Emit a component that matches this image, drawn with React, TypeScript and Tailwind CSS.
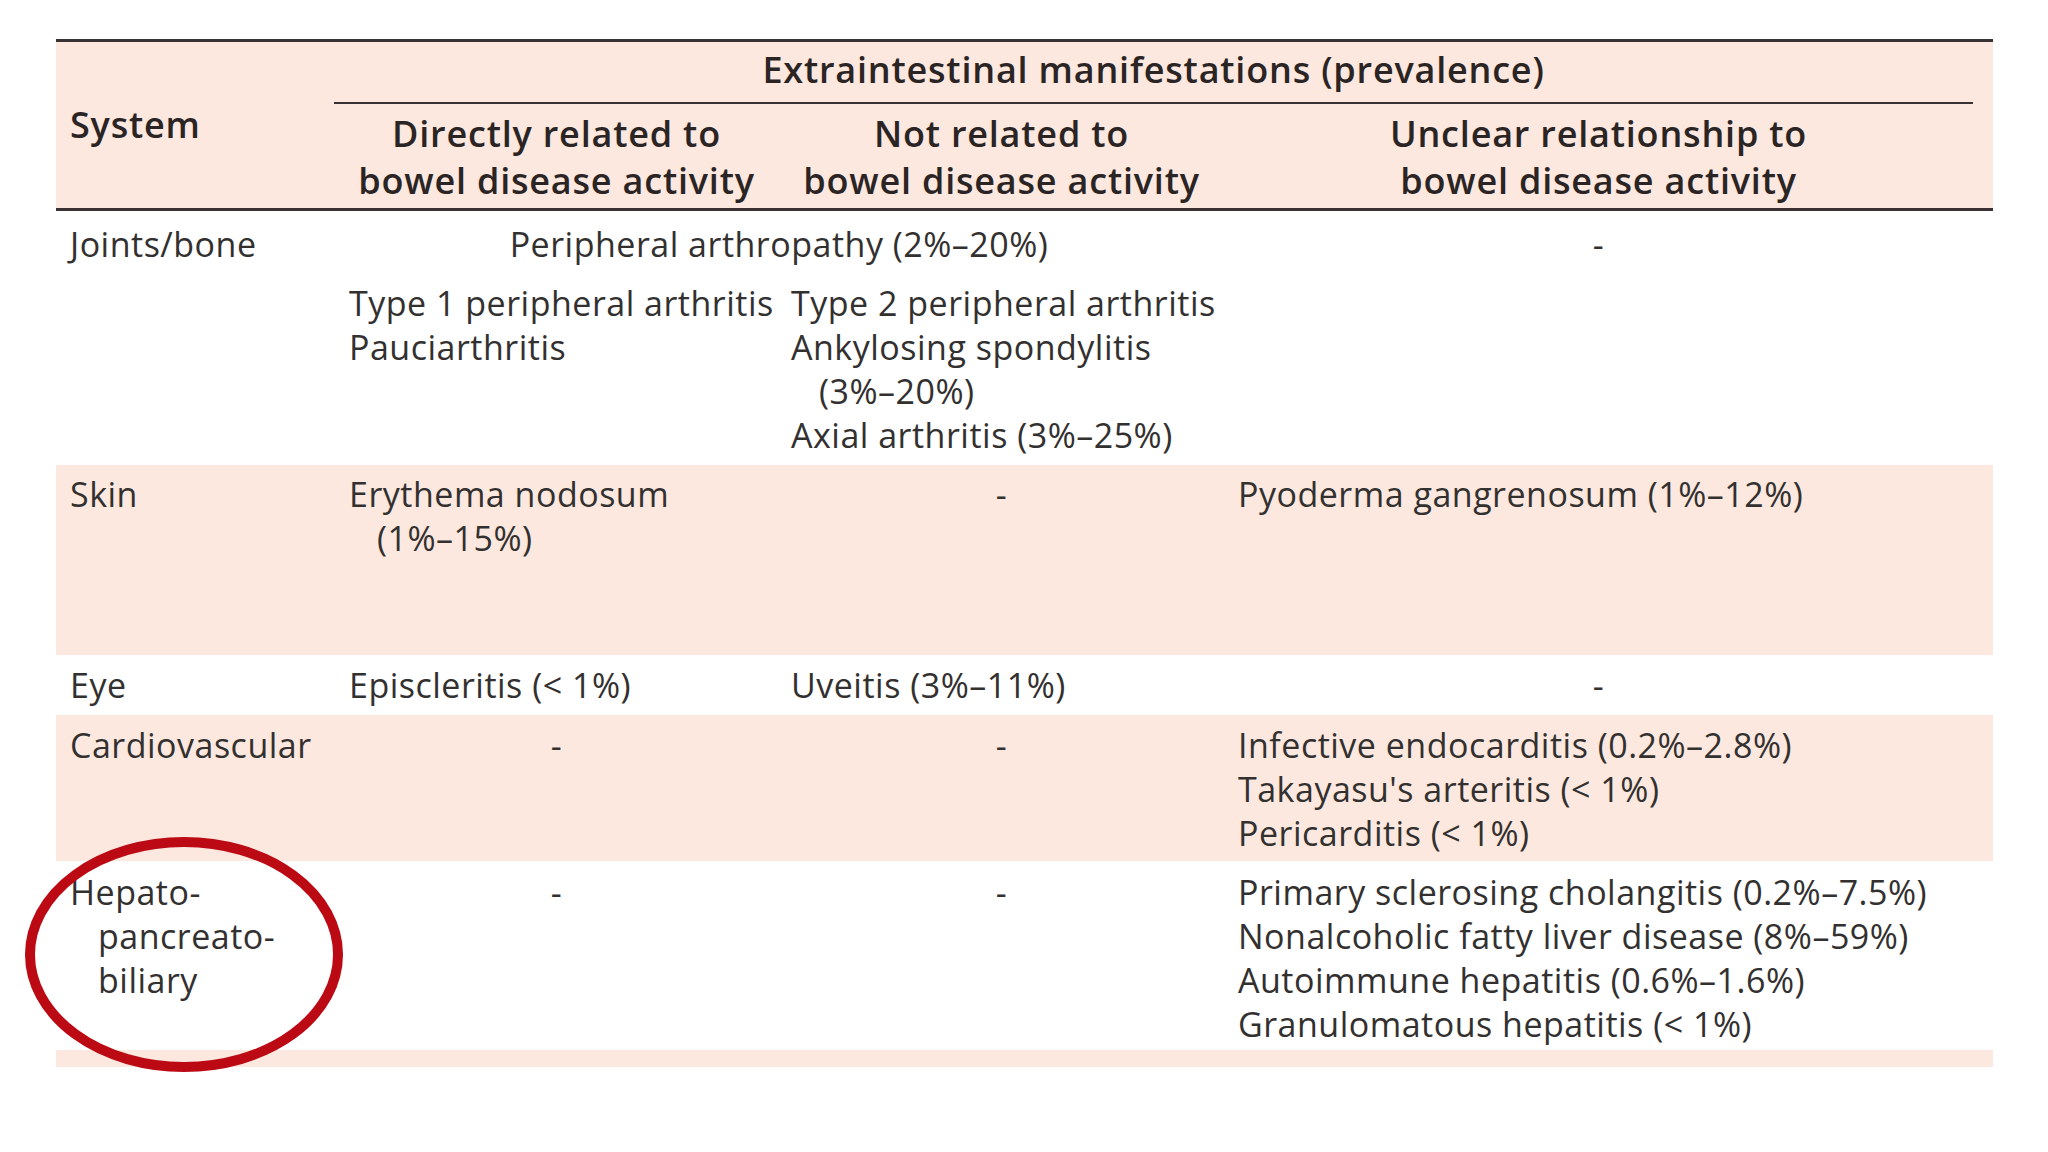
import React from 'react';

const cols = "grid grid-cols-[278px_445px_445px_1fr]";

const Lines = ({ lines }: { lines: string[] }) => (
  <div>
    {lines.map((l, i) => (
      <div key={i} className={l.startsWith(" ") ? "pl-[28px]" : ""}>
        {l.trim()}
      </div>
    ))}
  </div>
);

const App = () => {
  return (
    <div className="relative w-[2048px] h-[1152px] bg-white overflow-hidden font-['Open_Sans','Lato',sans-serif] text-[#333030]">
      <div className="ml-[56px] mt-[39px] w-[1937px]">
        {/* Header */}
        <div className={`${cols} bg-[#fce8de] border-t-[3px] border-b-[3px] border-[#3a3232] text-[#2b2424] font-semibold text-[36px] tracking-[0.8px]`}>
          <div className="row-span-2 flex items-center pl-[14px] leading-[44px]">System</div>
          <div className="col-span-3 mr-[20px] border-b-2 border-[#3a3232] text-center leading-[44px] pt-[6px] pb-[10px]">
            Extraintestinal manifestations (prevalence)
          </div>
          <div className="text-center leading-[47px] pt-[6px] pb-[4px]">
            <div>Directly related to</div>
            <div>bowel disease activity</div>
          </div>
          <div className="text-center leading-[47px] pt-[6px] pb-[4px]">
            <div>Not related to</div>
            <div>bowel disease activity</div>
          </div>
          <div className="text-center leading-[47px] pt-[6px] pb-[4px] pr-[20px]">
            <div>Unclear relationship to</div>
            <div>bowel disease activity</div>
          </div>
        </div>

        <div className="text-[34px] leading-[44px] tracking-[0.5px]">
          {/* Joints/bone */}
          <div className={`${cols} pt-[11px] pb-[8px] bg-white`}>
            <div className="row-span-2 pl-[14px]">Joints/bone</div>
            <div className="col-span-2 text-center">Peripheral arthropathy (2%–20%)</div>
            <div className="text-center pr-[20px]">-</div>
            <div className="pl-[15px] mt-[15px]">
              <Lines lines={["Type 1 peripheral arthritis", "Pauciarthritis"]} />
            </div>
            <div className="pl-[12px] mt-[15px]">
              <Lines lines={["Type 2 peripheral arthritis", "Ankylosing spondylitis", " (3%–20%)", "Axial arthritis (3%–25%)"]} />
            </div>
          </div>

          {/* Skin */}
          <div className={`${cols} h-[190px] pt-[7px] bg-[#fce8de]`}>
            <div className="pl-[14px]">Skin</div>
            <div className="pl-[15px]">
              <Lines lines={["Erythema nodosum", " (1%–15%)"]} />
            </div>
            <div className="text-center">-</div>
            <div className="pl-[14px]">Pyoderma gangrenosum (1%–12%)</div>
          </div>

          {/* Eye */}
          <div className={`${cols} h-[60px] pt-[8px] bg-white`}>
            <div className="pl-[14px]">Eye</div>
            <div className="pl-[15px]">Episcleritis (&lt; 1%)</div>
            <div className="pl-[12px]">Uveitis (3%–11%)</div>
            <div className="text-center pr-[20px]">-</div>
          </div>

          {/* Cardiovascular */}
          <div className={`${cols} h-[146px] pt-[8px] bg-[#fce8de]`}>
            <div className="pl-[14px]">Cardiovascular</div>
            <div className="text-center">-</div>
            <div className="text-center">-</div>
            <div className="pl-[14px]">
              <Lines lines={["Infective endocarditis (0.2%–2.8%)", "Takayasu's arteritis (< 1%)", "Pericarditis (< 1%)"]} />
            </div>
          </div>

          {/* Hepato-pancreato-biliary */}
          <div className={`${cols} h-[189px] pt-[9px] bg-white`}>
            <div className="pl-[14px]">
              <Lines lines={["Hepato-", " pancreato-", " biliary"]} />
            </div>
            <div className="text-center">-</div>
            <div className="text-center">-</div>
            <div className="pl-[14px]">
              <Lines
                lines={[
                  "Primary sclerosing cholangitis (0.2%–7.5%)",
                  "Nonalcoholic fatty liver disease (8%–59%)",
                  "Autoimmune hepatitis (0.6%–1.6%)",
                  "Granulomatous hepatitis (< 1%)",
                ]}
              />
            </div>
          </div>

          <div className="h-[17px] bg-[#fce8de]" />
        </div>
      </div>

      {/* red annotation ring */}
      <svg className="absolute left-[20px] top-[832px]" width="330" height="245" viewBox="0 0 330 245">
        <ellipse cx="164" cy="122.5" rx="154" ry="112.5" fill="none" stroke="#bb0a14" strokeWidth="10" />
      </svg>
    </div>
  );
};

export default App;
